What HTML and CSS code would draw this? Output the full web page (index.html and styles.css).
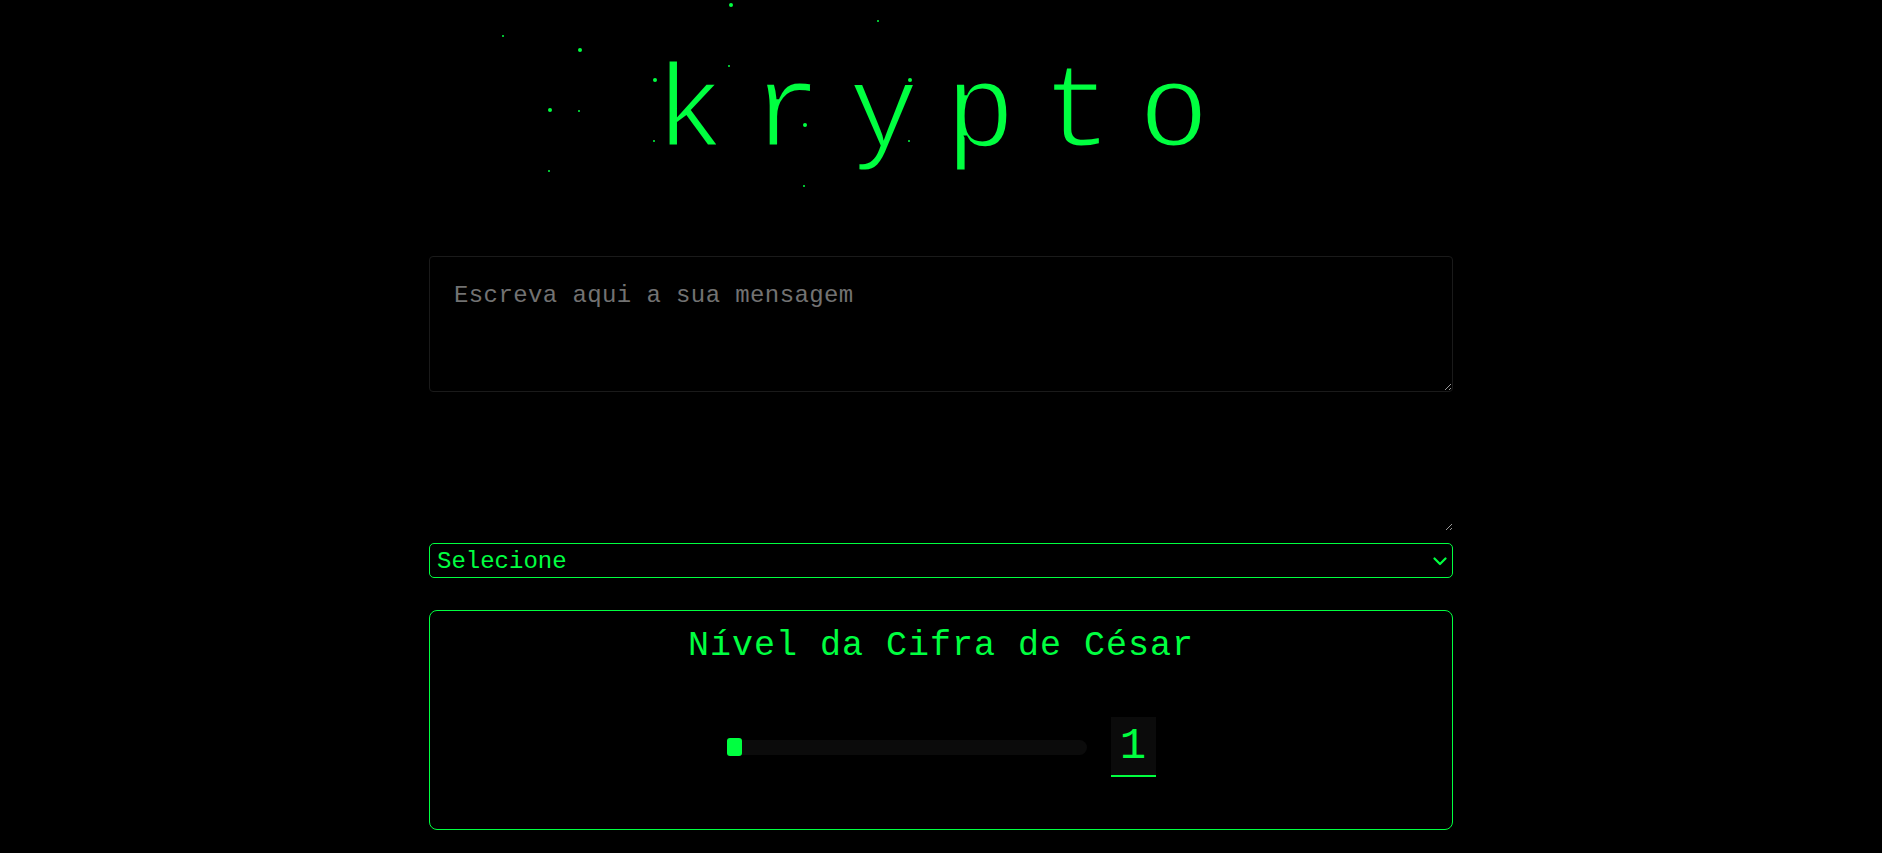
FILE: index.html
```html
<!DOCTYPE html>
<html lang="pt-BR">

<head>
  <meta charset="UTF-8">
  <title>krypto</title>
  <meta name="viewport" content="width=device-width, initial-scale=1.0">
  <link rel="stylesheet" href="styles.css">
</head>

<body>

  <main class="app">
    <header class="header">
      <div id="stars" class="stars"></div>
      <h1 class="logo">krypto</h1>
    </header>

    <textarea id="message" class="message" placeholder="Escreva aqui a sua mensagem"></textarea>
    <textarea id="result" class="result" readonly></textarea>

    <div class="select-wrap">
      <select id="method" class="method">
        <option value="">Selecione</option>
        <option value="cesar">Cifra de César</option>
        <option value="base64">Base64</option>
      </select>
      <svg class="chevron" viewBox="0 0 14 9" width="14" height="9">
        <path d="M1.5 1.5 L7 7 L12.5 1.5" fill="none" stroke="currentColor" stroke-width="2.2" stroke-linecap="round" stroke-linejoin="round" />
      </svg>
    </div>

    <section class="cesar-box">
      <h2>Nível da Cifra de César</h2>
      <div class="range-row">
        <input type="range" id="shift" class="shift" min="1" max="25" value="1">
        <output id="shiftValue" class="shift-value">1</output>
      </div>
    </section>
  </main>

  <script>
    // little dots around the logo
    const stars = [
      [302, 5, 4], [449, 21, 2], [74, 36, 2], [151, 50, 4], [300, 66, 2],
      [226, 80, 4], [481, 80, 4], [121, 110, 4], [150, 111, 2], [376, 125, 4],
      [225, 141, 2], [480, 141, 2], [120, 171, 2], [375, 186, 2]
    ];
    const starBox = document.getElementById('stars');

    stars.forEach(([x, y, size]) => {
      const dot = document.createElement('span');
      dot.className = 'star';
      dot.style.left = (x - size / 2) + 'px';
      dot.style.top = (y - size / 2) + 'px';
      dot.style.width = size + 'px';
      dot.style.height = size + 'px';
      starBox.appendChild(dot);
    });

    const shift = document.getElementById('shift');
    const shiftValue = document.getElementById('shiftValue');

    shift.addEventListener('input', () => {
      shiftValue.textContent = shift.value;
    });
  </script>

</body>

</html>
```

FILE: styles.css
```css
* {
  box-sizing: border-box;
  margin: 0;
  padding: 0;
}

body {
  background: #000;
  color: #00ff40;
  font-family: 'Liberation Mono', 'DejaVu Sans Mono', monospace;
}

.app {
  width: 1024px;
  margin: 0 auto;
}

.header {
  position: relative;
  padding-top: 52px;
  margin-bottom: 79px;
}

.stars {
  position: absolute;
  inset: 0;
}

.star {
  position: absolute;
  border-radius: 50%;
  background: #00ff40;
}

.logo {
  position: relative;
  font-size: 118px;
  font-weight: normal;
  line-height: 125px;
  letter-spacing: 26px;
  text-align: center;
  padding-left: 8px;
  /* thins the strokes a bit */
  -webkit-text-stroke: 3px #000;
}

.message,
.result {
  display: block;
  width: 100%;
  height: 136px;
  background: #000;
  color: #00ff40;
  font-family: inherit;
  font-size: 24px;
  letter-spacing: 0.4px;
  color-scheme: dark;
  outline: none;
}

.message {
  border: 1px solid #1a1a1a;
  border-radius: 4px;
  padding: 25px 24px;
}

.message::placeholder {
  color: #727272;
}

.result {
  border: none;
  margin-top: 3px;
  padding: 25px 24px;
}

.select-wrap {
  position: relative;
  margin-top: 12px;
}

.method {
  appearance: none;
  width: 100%;
  height: 35px;
  padding: 2px 7px 0;
  background: #000;
  color: #00ff40;
  border: 1px solid #00ff40;
  border-radius: 5px;
  font-family: inherit;
  font-size: 24px;
  outline: none;
}

.chevron {
  position: absolute;
  right: 6px;
  top: 14px;
  color: #00ff40;
  pointer-events: none;
}

.cesar-box {
  margin-top: 32px;
  height: 220px;
  border: 1px solid #00ff40;
  border-radius: 8px;
  padding-top: 15px;
  text-align: center;
}

.cesar-box h2 {
  font-size: 35px;
  font-weight: normal;
  letter-spacing: 1px;
}

.range-row {
  display: flex;
  justify-content: center;
  align-items: center;
  gap: 24px;
  margin-top: 51px;
}

.shift {
  -webkit-appearance: none;
  appearance: none;
  width: 360px;
  height: 15px;
  background: #0b0b0b;
  border-radius: 8px;
  outline: none;
}

.shift::-webkit-slider-thumb {
  -webkit-appearance: none;
  width: 15px;
  height: 18px;
  background: #00ff40;
  border-radius: 3px;
  cursor: pointer;
}

.shift-value {
  display: block;
  width: 45px;
  height: 60px;
  background: #0b0b0b;
  border-bottom: 2px solid #00ff40;
  font-size: 44px;
  line-height: 58px;
  text-align: center;
}
```
